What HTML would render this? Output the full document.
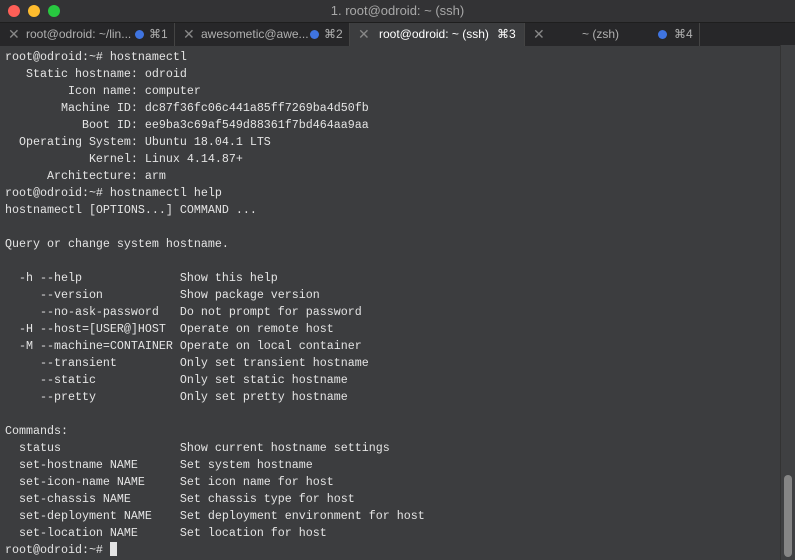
<!DOCTYPE html><html><head><style>
body{margin:0;width:795px;height:560px;background:#3c3d3f;overflow:hidden;font-family:"Liberation Sans",sans-serif;position:relative}
.title{position:absolute;left:0;top:0;width:795px;height:22px;background:#333335;color:#a8a8a8;font-size:13px;text-align:center;line-height:22px}
.dot{position:absolute;top:5px;width:12px;height:12px;border-radius:50%}
.tabs{position:absolute;top:22px;left:0;width:795px;height:23px;background:#272729;border-top:1px solid #1e1e1e}
.tab{position:absolute;top:0;height:23px;width:174px;border-right:1px solid #444;color:#b0b0b0;font-size:12px;line-height:23px}
.tab .x{position:absolute;left:8px;color:#888;font-size:14px}
.tab .t{position:absolute;left:26px}
.tab .b{position:absolute;top:7px;width:9px;height:9px;border-radius:50%;background:#3f74e0}
.tab .k{position:absolute;left:149px}
pre{position:absolute;left:5px;top:49px;margin:0;font-family:"Liberation Mono",monospace;font-size:11.67px;line-height:17px;color:#e4e4e4}
.sb{position:absolute;left:780px;top:45px;width:15px;height:515px;background:#3f4042;border-left:1px solid #333}
.th{position:absolute;left:784px;top:475px;width:8px;height:82px;border-radius:4px;background:#858585}
.cur{display:inline-block;width:7px;height:14px;background:#e4e4e4;vertical-align:-3px}
</style></head><body>
<div class="title">1. root@odroid: ~ (ssh)</div>
<div class="dot" style="left:8px;background:#fe5f57"></div>
<div class="dot" style="left:28px;background:#febc2e"></div>
<div class="dot" style="left:48px;background:#28c840"></div>
<div class="tabs">
<div class="tab" style="left:0"><span class="x">✕</span><span class="t">root@odroid: ~/lin...</span><span class="b" style="left:135px"></span><span class="k">⌘1</span></div>
<div class="tab" style="left:175px"><span class="x">✕</span><span class="t">awesometic@awe...</span><span class="b" style="left:135px"></span><span class="k">⌘2</span></div>
<div class="tab" style="left:350px;background:#3c3d3f;color:#fff"><span class="x">✕</span><span class="t" style="left:29px">root@odroid: ~ (ssh)</span><span class="k" style="left:147px">⌘3</span></div>
<div class="tab" style="left:525px"><span class="x">✕</span><span class="t" style="left:57px">~ (zsh)</span><span class="b" style="left:133px"></span><span class="k">⌘4</span></div>
</div>
<pre>root@odroid:~# hostnamectl
   Static hostname: odroid
         Icon name: computer
        Machine ID: dc87f36fc06c441a85ff7269ba4d50fb
           Boot ID: ee9ba3c69af549d88361f7bd464aa9aa
  Operating System: Ubuntu 18.04.1 LTS
            Kernel: Linux 4.14.87+
      Architecture: arm
root@odroid:~# hostnamectl help
hostnamectl [OPTIONS...] COMMAND ...

Query or change system hostname.

  -h --help              Show this help
     --version           Show package version
     --no-ask-password   Do not prompt for password
  -H --host=[USER@]HOST  Operate on remote host
  -M --machine=CONTAINER Operate on local container
     --transient         Only set transient hostname
     --static            Only set static hostname
     --pretty            Only set pretty hostname

Commands:
  status                 Show current hostname settings
  set-hostname NAME      Set system hostname
  set-icon-name NAME     Set icon name for host
  set-chassis NAME       Set chassis type for host
  set-deployment NAME    Set deployment environment for host
  set-location NAME      Set location for host
root@odroid:~# <span class="cur"></span></pre>
<div class="sb"></div><div class="th"></div>
</body></html>
